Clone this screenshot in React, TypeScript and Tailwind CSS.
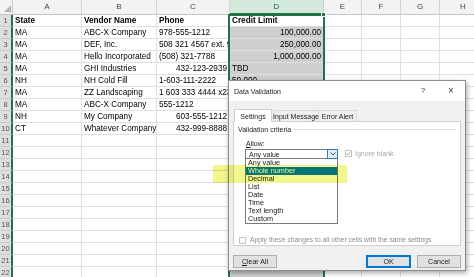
import React from "react";

const widths = ["w-[69px]", "w-[75px]", "w-[73px]", "w-[94px]", "w-[38px]", "w-[39px]", "w-[39px]", "w-[47px]"];
const letters = ["A", "B", "C", "D", "E", "F", "G", "H"];

type Row = { a?: string; b?: string; c?: string; cr?: boolean; d?: string; dr?: boolean; bold?: boolean };
const data: Row[] = [
  { a: "State", b: "Vendor Name", c: "Phone", d: "Credit Limit", bold: true },
  { a: "MA", b: "ABC-X Company", c: "978-555-1212", d: "100,000.00", dr: true },
  { a: "MA", b: "DEF, Inc.", c: "508 321 4567 ext. 9999", d: "250,000.00", dr: true },
  { a: "MA", b: "Hello Incorporated", c: "(508) 321-7788", d: "1,000,000.00", dr: true },
  { a: "MA", b: "GHI Industries", c: "432-123-2939", cr: true, d: "TBD" },
  { a: "NH", b: "NH Cold Fill", c: "1-603-111-2222", d: "50,000" },
  { a: "MA", b: "ZZ Landscaping", c: "1 603 333 4444 x234" },
  { a: "MA", b: "ABC-X Company", c: "555-1212" },
  { a: "NH", b: "My Company", c: "603-555-1212", cr: true },
  { a: "CT", b: "Whatever Company", c: "432-999-8888", cr: true },
];
const rows: Row[] = Array.from({ length: 22 }, (_, i) => data[i] ?? {});

const listItems = ["Any value", "Whole number", "Decimal", "List", "Date", "Time", "Text length", "Custom"];

function Cell({ w, text, right, bold, sel, first }: { w: string; text?: string; right?: boolean; bold?: boolean; sel?: boolean; first?: boolean }) {
  return (
    <div
      className={`${w} h-full shrink-0 border-r border-b overflow-hidden whitespace-nowrap flex items-center leading-none pt-[1px] ${
        right ? "justify-end pr-[2px]" : "justify-start pl-[2px]"
      } ${sel ? (first ? "bg-white border-[#dcdcdc]" : "bg-[#cfcfcf] border-[#dedede]") : "bg-white border-[#e0e0e0]"} ${bold ? "font-bold" : ""}`}
    >
      {text}
    </div>
  );
}

export default function App() {
  return (
    <div className="relative w-[474px] h-[277px] overflow-hidden bg-white font-['Liberation_Sans',Arial,sans-serif] text-black">
      {/* column headers */}
      <div className="flex h-[15px]">
        <div className="w-[13px] shrink-0 h-full bg-[#f3f3f3] border-r border-b border-[#c8c8c8] relative">
          <svg className="absolute right-[1px] bottom-[2px]" width="7" height="7" viewBox="0 0 7 7">
            <polygon points="7,0 7,7 0,7" fill="#b4b4b4" />
          </svg>
        </div>
        {letters.map((l, i) =>
          l === "D" ? (
            <div key={l} className={`${widths[i]} shrink-0 h-full bg-[#d3e9dc] border-r border-[#c8c8c8] border-b-2 border-b-[#217346] flex items-center justify-center text-[8px] text-[#1d5c38]`}>
              {l}
            </div>
          ) : (
            <div key={l} className={`${widths[i]} shrink-0 h-full bg-[#f3f3f3] border-r border-b border-[#d4d4d4] border-b-[#c6c6c6] flex items-center justify-center text-[8px] text-[#444]`}>
              {l}
            </div>
          )
        )}
      </div>
      {/* rows */}
      {rows.map((r, i) => (
        <div key={i} className="flex h-[12px] text-[8.2px]">
          <div className="w-[13px] shrink-0 h-full bg-[#dedede] border-b border-[#cacaca] border-r-2 border-r-[#217346] flex items-center justify-center text-[7.5px] text-[#555] leading-none pt-[1px]">
            {i + 1}
          </div>
          <Cell w={widths[0]} text={r.a} bold={r.bold} />
          <Cell w={widths[1]} text={r.b} bold={r.bold} />
          <Cell w={widths[2]} text={r.c} right={r.cr} bold={r.bold} />
          <Cell w={widths[3]} text={r.d} right={r.dr} bold={r.bold} sel first={i === 0} />
          <Cell w={widths[4]} />
          <Cell w={widths[5]} />
          <Cell w={widths[6]} />
          <Cell w={widths[7]} />
        </div>
      ))}

      {/* selection outline */}
      <div className="absolute left-[228px] top-[14px] w-[97px] h-[300px] border-2 border-[#217346] pointer-events-none" />
      <div className="absolute left-[321px] top-[12px] w-[5px] h-[5px] bg-[#217346] border border-white" />

      {/* dialog */}
      <div className="absolute left-[228px] top-[80px] w-[238px] h-[191px] bg-[#f0f0f0] border border-[#8c8c8c] shadow-[1px_2px_5px_rgba(0,0,0,0.35)] flex flex-col text-[7px] text-[#1a1a1a] leading-none whitespace-nowrap">
        <div className="h-[20px] shrink-0 bg-white flex items-center pl-[5px] pr-[9px]">
          <span>Data Validation</span>
          <span className="ml-auto w-[10px] text-center text-[7.5px]">?</span>
          <span className="ml-[18px] w-[10px] text-center text-[10px] font-light text-[#333]">×</span>
        </div>
        <div className="flex-1 flex flex-col px-[4px] pt-[7px]">
          {/* tabs */}
          <div className="flex items-end h-[13px] pl-[1px]">
            <div className="w-[38px] h-[13px] bg-white border border-b-0 border-[#d0d0d0] flex items-center justify-center relative top-[1px]">Settings</div>
            <div className="w-[46px] h-[11px] ml-[1px] border border-b-0 border-[#d9d9d9] flex items-center justify-center">Input Message</div>
            <div className="w-[38px] h-[11px] border border-b-0 border-l-0 border-[#d9d9d9] flex items-center justify-center">Error Alert</div>
          </div>
          {/* panel */}
          <div className="h-[125px] bg-white border border-[#d0d0d0] flex flex-col px-[4px] pt-[4px]">
            <div className="flex items-center h-[7px]">
              <span>Validation criteria</span>
              <div className="flex-1 h-px bg-[#dcdcdc] ml-[3px]" />
            </div>
            <div className="ml-[8px] mt-[7px] h-[7px] flex items-center">
              <span><span className="underline">A</span>llow:</span>
            </div>
            <div className="flex ml-[7px] mt-[2px] items-start">
              <div className="flex flex-col w-[93px]">
                <div className="h-[10px] border border-[#7a7a7a] bg-white flex items-center">
                  <span className="pl-[3px] flex-1">Any value</span>
                  <div className="w-[11px] h-[10px] -mr-px -my-px border border-[#2d7ac7] bg-[#e3effa] flex items-center justify-center">
                    <svg width="6" height="4" viewBox="0 0 6 4"><polyline points="0.5,0.5 3,3 5.5,0.5" fill="none" stroke="#333" strokeWidth="0.9" /></svg>
                  </div>
                </div>
                <div className="border border-[#7a7a7a] border-t-0 bg-white flex flex-col">
                  {listItems.map((it, i) => (
                    <div key={it} className={`h-[8px] flex items-center pl-[2px] text-[7.3px] ${i === 1 ? "bg-[#0078d7] text-white" : ""}`}>
                      {it}
                    </div>
                  ))}
                </div>
              </div>
              <div className="ml-[7px] mt-[1px] flex items-center text-[#a8a8a8]">
                <div className="w-[7px] h-[7px] border border-[#c4c4c4] bg-white flex items-center justify-center">
                  <svg width="5" height="5" viewBox="0 0 5 5"><polyline points="0.6,2.6 2,4 4.5,0.8" fill="none" stroke="#a8a8a8" strokeWidth="0.9" /></svg>
                </div>
                <span className="ml-[3px]">Ignore blank</span>
              </div>
            </div>
            <div className="flex items-center mt-[13px] ml-[1px] text-[#8c8c8c]">
              <div className="w-[7px] h-[7px] border border-[#c4c4c4] bg-white" />
              <span className="ml-[4px] text-[6.8px]">Apply these changes to all other cells with the same settings</span>
            </div>
          </div>
          {/* buttons */}
          <div className="flex items-center mt-[9px]">
            <div className="w-[44px] h-[13px] bg-[#e1e1e1] border border-[#adadad] flex items-center justify-center">
              <span><span className="underline">C</span>lear All</span>
            </div>
            <div className="ml-auto w-[45px] h-[13px] bg-[#e1e1e1] border-2 border-[#0078d7] flex items-center justify-center">OK</div>
            <div className="ml-[6px] w-[44px] h-[13px] bg-[#e1e1e1] border border-[#adadad] flex items-center justify-center">Cancel</div>
          </div>
        </div>
      </div>

      {/* highlighter */}
      <div className="absolute left-[213px] top-[165px] w-[134px] h-[18px] bg-[#f2f68c] mix-blend-multiply blur-[0.5px] pointer-events-none" />
    </div>
  );
}
